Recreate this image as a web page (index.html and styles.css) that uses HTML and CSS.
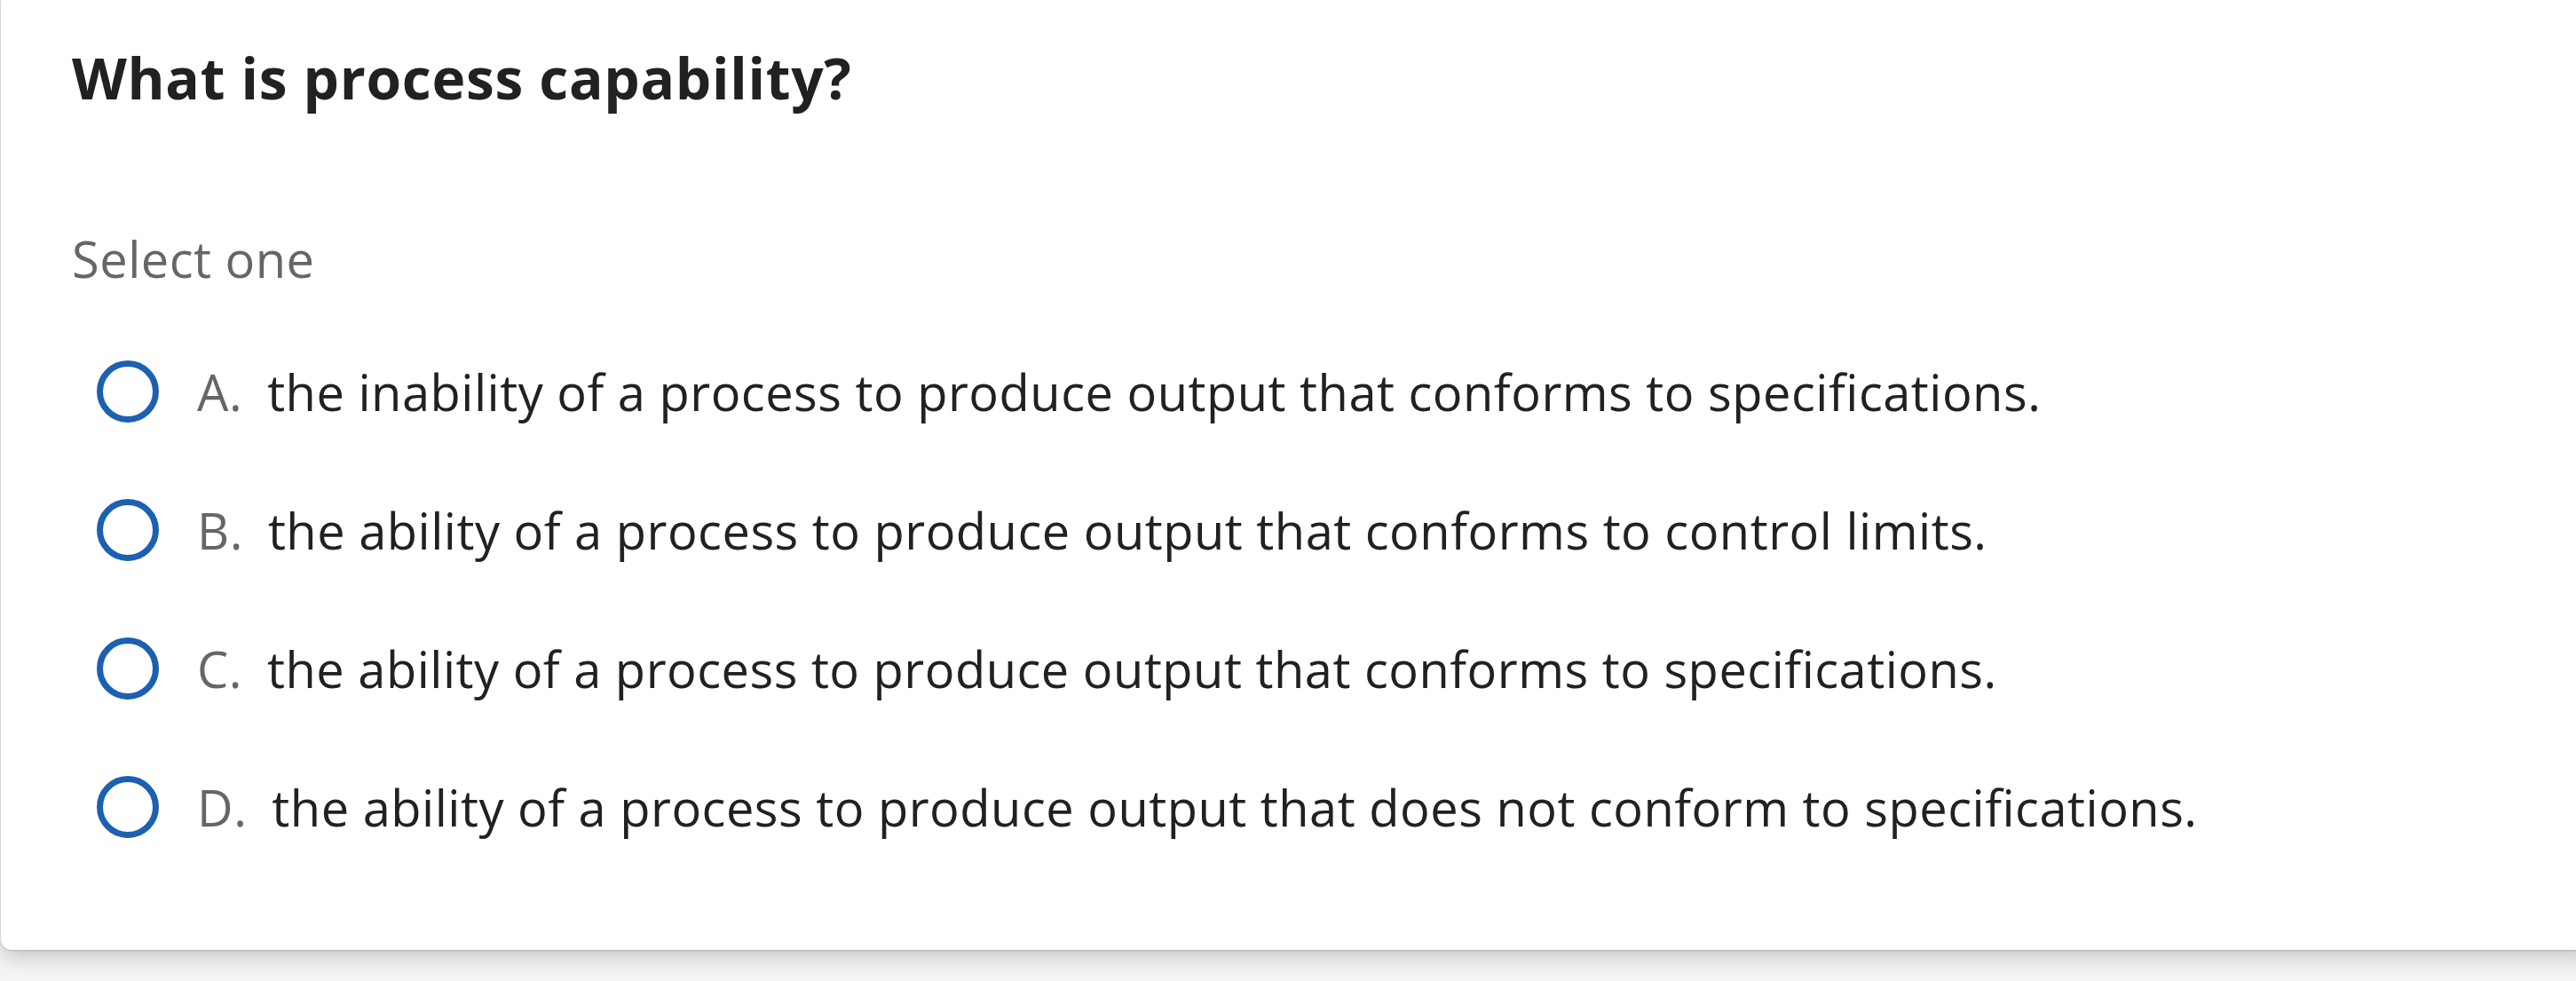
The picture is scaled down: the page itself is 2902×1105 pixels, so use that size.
FILE: index.html
```html
<!DOCTYPE html>
<html lang="en">
<head>
<meta charset="utf-8">
<title>What is process capability?</title>
<link rel="stylesheet" href="styles.css">
</head>
<body>
<div class="card">
  <h1 class="question">What is process capability?</h1>
  <p class="hint">Select one</p>
  <ul class="options">
    <li class="option"><span class="radio"></span><span class="label">A.</span><span class="text">the inability of a process to produce output that conforms to specifications.</span></li>
    <li class="option"><span class="radio"></span><span class="label">B.</span><span class="text">the ability of a process to produce output that conforms to control limits.</span></li>
    <li class="option"><span class="radio"></span><span class="label">C.</span><span class="text">the ability of a process to produce output that conforms to specifications.</span></li>
    <li class="option"><span class="radio"></span><span class="label">D.</span><span class="text">the ability of a process to produce output that does not conform to specifications.</span></li>
  </ul>
</div>
</body>
</html>
```

FILE: styles.css
```css
html, body {
  margin: 0;
  padding: 0;
}
body {
  background: #f5f5f5;
  overflow: hidden;
  font-family: "Open Sans", "Noto Sans", sans-serif;
  height: 1105px;
}
.card {
  margin: -20px -20px 0 1px;
  padding: 64px 0 123px 80px;
  background: #ffffff;
  border-radius: 12px;
  box-shadow: 0 1px 2px rgba(0, 0, 0, 0.16), 0 8px 24px rgba(0, 0, 0, 0.2);
}
.question {
  margin: 0;
  font-size: 64px;
  line-height: 88px;
  font-weight: 700;
  letter-spacing: 0.7px;
  color: #212121;
}
.hint {
  margin: 121px 0 0 0;
  font-size: 56px;
  line-height: 76px;
  letter-spacing: 0.5px;
  color: #666666;
}
.options {
  list-style: none;
  margin: 74px 0 0 28px;
  padding: 0;
  display: flex;
  flex-direction: column;
  gap: 80px;
}
.option {
  display: flex;
  align-items: center;
  font-size: 56px;
  line-height: 76px;
  letter-spacing: 0.5px;
  color: #212121;
}
.radio {
  box-sizing: border-box;
  width: 70px;
  height: 70px;
  border: 7px solid #1c60b0;
  border-radius: 50%;
  flex: none;
  margin-right: 43px;
}
.label {
  color: #666666;
  margin-right: 28px;
}
.text {
  white-space: nowrap;
}
```
